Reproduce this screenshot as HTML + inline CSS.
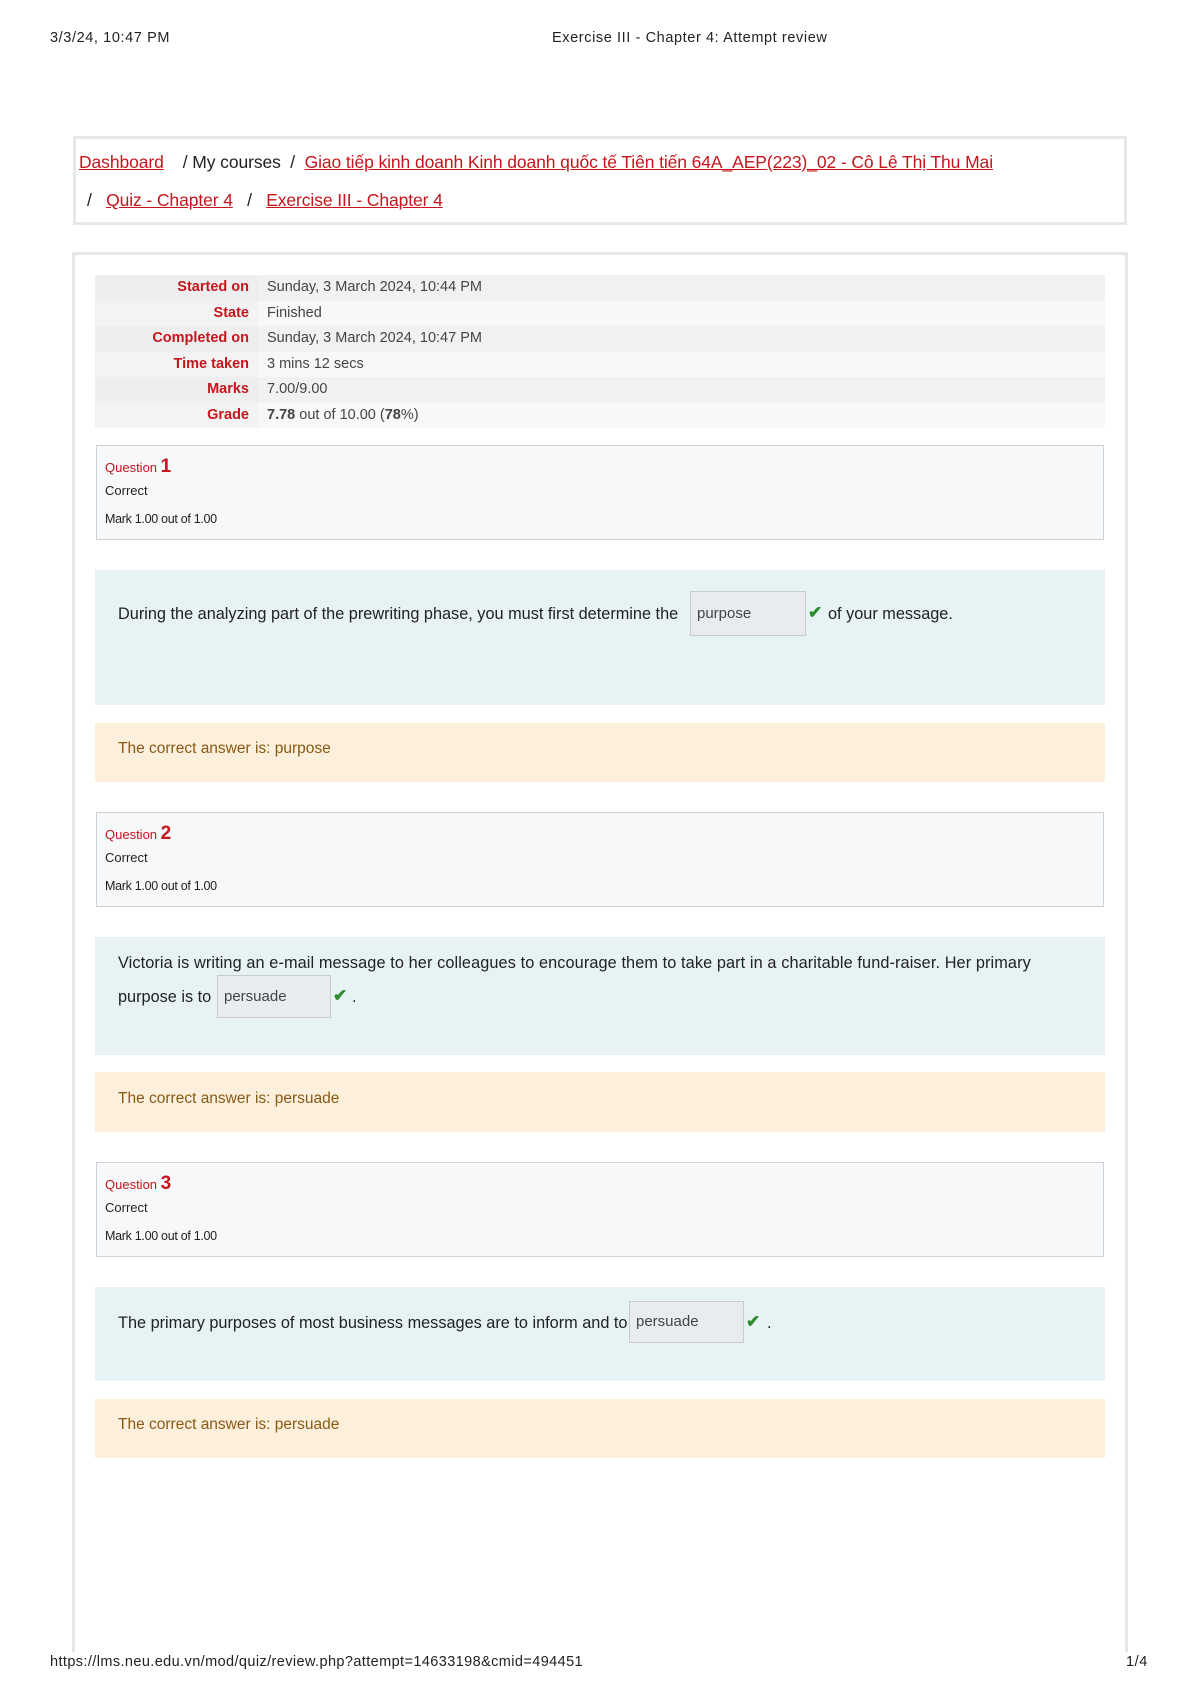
<!DOCTYPE html>
<html><head><meta charset="utf-8"><style>
*{margin:0;padding:0;box-sizing:border-box}
body{width:1200px;height:1698px;position:relative;background:#fff;font-family:"Liberation Sans","Noto Sans CJK SC",sans-serif;color:#222;overflow:hidden}
.a{position:absolute;white-space:nowrap}
.hdr{font-size:14.5px;color:#222;letter-spacing:0.6px}
.bc{font-size:17.5px;color:#222;letter-spacing:-0.1px}
.bc a{color:#c4161c;text-decoration:underline}
.tbl{position:absolute;left:95px;top:275px;width:1010px}
.row{height:25.5px;display:flex;font-size:14.5px;line-height:25.5px}
.row:nth-child(odd){background:#f1f1f1}
.row:nth-child(even){background:#f8f8f8}
.lab{width:163px;text-align:right;padding-right:9px;color:#c4161c;font-weight:bold;background:#eeeeee}
.row:nth-child(even) .lab{background:#f3f3f3}
.val{padding-left:9px;color:#444}
.qb{position:absolute;left:96px;width:1008px;height:95px;background:#f7f8fa;border:1px solid #cfd3d8}
.qb .t{position:absolute;left:8px;top:10px;color:#c4161c;font-size:13px}
.qb .t b{font-size:19px}
.qb .c{position:absolute;left:8px;top:37px;font-size:13px;color:#222}
.qb .m{position:absolute;left:8px;top:66px;font-size:12.5px;color:#222;letter-spacing:-0.3px}
.teal{position:absolute;left:95px;width:1010px;background:#e7f2f4}
.fb{position:absolute;left:95px;width:1010px;background:#fcefdc;color:#8a5a14;font-size:15.5px}
.qt{position:absolute;font-size:16.3px;color:#222;white-space:nowrap}
.inp{position:absolute;background:#e9ecee;border:1px solid #c8cacc;font-size:15px;color:#444;padding-left:6px}
.ck{position:absolute;color:#2e8b2e;font-size:17px;font-weight:bold}
</style></head><body>
<div class="a hdr" style="left:50px;top:30px">3/3/24, 10:47 PM</div>
<div class="a hdr" style="left:552px;top:30px">Exercise III - Chapter 4: Attempt review</div>

<div class="a" style="left:73px;top:136px;width:1054px;height:89px;border:3px solid #e6e7e9"></div>
<div class="a bc" style="left:79px;top:152px"><a>Dashboard</a> &nbsp;&nbsp;&nbsp;/ My courses &nbsp;/ &nbsp;<a>Giao tiếp kinh doanh Kinh doanh quốc tế Tiên tiến 64A_AEP(223)_02 - Cô Lê Thị Thu Mai</a></div>
<div class="a bc" style="left:87px;top:190px">/ &nbsp;&nbsp;<a>Quiz - Chapter 4</a> &nbsp;&nbsp;/ &nbsp;&nbsp;<a>Exercise III - Chapter 4</a></div>

<div class="a" style="left:72px;top:252px;width:1056px;height:1400px;border:3px solid #e6e7e9;border-bottom:none"></div>

<div class="tbl">
<div class="row"><div class="lab">Started on</div><div class="val">Sunday, 3 March 2024, 10:44 PM</div></div>
<div class="row"><div class="lab">State</div><div class="val">Finished</div></div>
<div class="row"><div class="lab">Completed on</div><div class="val">Sunday, 3 March 2024, 10:47 PM</div></div>
<div class="row"><div class="lab">Time taken</div><div class="val">3 mins 12 secs</div></div>
<div class="row"><div class="lab">Marks</div><div class="val">7.00/9.00</div></div>
<div class="row"><div class="lab">Grade</div><div class="val"><b>7.78</b> out of 10.00 (<b>78</b>%)</div></div>
</div>

<div class="qb" style="top:445px"><div class="t">Question <b>1</b></div><div class="c">Correct</div><div class="m">Mark 1.00 out of 1.00</div></div>
<div class="teal" style="top:570px;height:135px"></div>
<div class="qt" style="left:118px;top:605px">During the analyzing part of the prewriting phase, you must first determine the</div>
<div class="inp" style="left:690px;top:591px;width:116px;height:45px;line-height:43px">purpose</div>
<div class="ck" style="left:808px;top:603px">✔</div>
<div class="qt" style="left:828px;top:605px">of your message.</div>
<div class="fb" style="top:723px;height:59px"><span class="a" style="left:23px;top:17px">The correct answer is: purpose</span></div>

<div class="qb" style="top:812px"><div class="t">Question <b>2</b></div><div class="c">Correct</div><div class="m">Mark 1.00 out of 1.00</div></div>
<div class="teal" style="top:937px;height:118px"></div>
<div class="qt" style="left:118px;top:954px;letter-spacing:0.1px">Victoria is writing an e-mail message to her colleagues to encourage them to take part in a charitable fund-raiser. Her primary</div>
<div class="qt" style="left:118px;top:988px">purpose is to</div>
<div class="inp" style="left:217px;top:975px;width:114px;height:43px;line-height:41px">persuade</div>
<div class="ck" style="left:333px;top:986px">✔</div>
<div class="qt" style="left:352px;top:988px">.</div>
<div class="fb" style="top:1072px;height:60px"><span class="a" style="left:23px;top:18px">The correct answer is: persuade</span></div>

<div class="qb" style="top:1162px"><div class="t">Question <b>3</b></div><div class="c">Correct</div><div class="m">Mark 1.00 out of 1.00</div></div>
<div class="teal" style="top:1287px;height:94px"></div>
<div class="qt" style="left:118px;top:1314px">The primary purposes of most business messages are to inform and to</div>
<div class="inp" style="left:629px;top:1301px;width:115px;height:42px;line-height:40px">persuade</div>
<div class="ck" style="left:746px;top:1312px">✔</div>
<div class="qt" style="left:767px;top:1314px">.</div>
<div class="fb" style="top:1399px;height:59px"><span class="a" style="left:23px;top:17px">The correct answer is: persuade</span></div>

<div class="a hdr" style="left:50px;top:1654px;letter-spacing:0.4px">https://lms.neu.edu.vn/mod/quiz/review.php?attempt=14633198&amp;cmid=494451</div>
<div class="a hdr" style="left:1126px;top:1654px">1/4</div>
</body></html>
